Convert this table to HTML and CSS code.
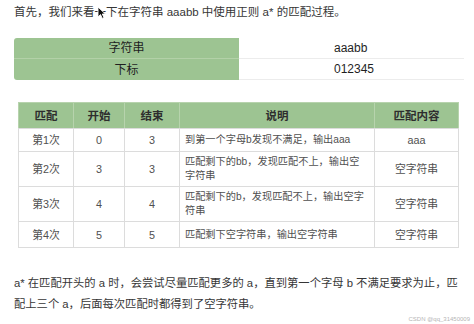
FILE: index.html
```html
<!DOCTYPE html>
<html lang="zh">
<head>
<meta charset="utf-8">
<link rel="stylesheet" href="styles.css">
</head>
<body>
<div class="page">
  <p class="para first">首先，我们来看一下在字符串 aaabb 中使用正则 a* 的匹配过程。<svg class="cursor" width="9" height="13" viewBox="0 0 9 13"><path d="M1 1 L1 11 L3.5 8.6 L5.3 12.4 L7 11.6 L5.3 8 L8.4 8 Z" fill="#111" stroke="#fff" stroke-width="0.9" stroke-linejoin="round"/></svg></p>

  <table class="info">
    <tr><td class="key top">字符串</td><td class="val">aaabb</td></tr>
    <tr><td class="key bottom">下标</td><td class="val">012345</td></tr>
  </table>

  <table class="steps">
    <colgroup>
      <col class="c1"><col class="c2"><col class="c3"><col class="c4"><col class="c5">
    </colgroup>
    <tr class="head"><th>匹配</th><th>开始</th><th>结束</th><th>说明</th><th>匹配内容</th></tr>
    <tr class="r1"><td>第1次</td><td>0</td><td>3</td><td class="desc">到第一个字母b发现不满足，输出aaa</td><td>aaa</td></tr>
    <tr class="r2"><td>第2次</td><td>3</td><td>3</td><td class="desc">匹配剩下的bb，发现匹配不上，输出空<br>字符串</td><td>空字符串</td></tr>
    <tr class="r3"><td>第3次</td><td>4</td><td>4</td><td class="desc">匹配剩下的b，发现匹配不上，输出空字<br>符串</td><td>空字符串</td></tr>
    <tr class="r4"><td>第4次</td><td>5</td><td>5</td><td class="desc">匹配剩下空字符串，输出空字符串</td><td>空字符串</td></tr>
  </table>

  <p class="para last">a* 在匹配开头的 a 时，会尝试尽量匹配更多的 a，直到第一个字母 b 不满足要求为止，匹配上三个 a，后面每次匹配时都得到了空字符串。</p>
  <div class="mark">CSDN @qq_31450009</div>
</div>
</body>
</html>
```
FILE: styles.css
```css
html, body {
  margin: 0;
  padding: 0;
  background: #fff;
}
body {
  font-family: "Liberation Sans", "Noto Sans CJK SC", sans-serif;
  color: #363636;
  width: 474px;
  height: 324px;
  overflow: hidden;
}
.page {
  padding: 0 10px 0 14px;
  position: relative;
  height: 324px;
  box-sizing: border-box;
}
.para {
  margin: 0;
  font-size: 11.3px;
  line-height: 21px;
}
.first {
  padding-top: 2px;
  position: relative;
  font-size: 11.5px;
}
.cursor {
  position: absolute;
  left: 83px;
  top: 6px;
}
.info {
  margin-top: 15px;
  border-collapse: separate;
  border-spacing: 0;
  width: 450px;
  font-size: 12px;
  color: #1f1f1f;
}
.info td {
  height: 21px;
  padding: 0;
  box-sizing: border-box;
  line-height: 20px;
}
.key {
  width: 225px;
  background: #9dc492;
  text-align: center;
}
.key.top {
  border-top-left-radius: 3px;
  border-bottom: 1px solid #b3d1a8;
}
.key.bottom {
  border-bottom-left-radius: 3px;
}
.val {
  padding-left: 95px !important;
  border-bottom: 1px solid #ececec;
}
.steps {
  margin: 22px 0 0 4px;
  border-collapse: collapse;
  table-layout: fixed;
  width: 440px;
  font-size: 10.8px;
  color: #505050;
}
.c1 { width: 55px; }
.c2 { width: 51px; }
.c3 { width: 55px; }
.c4 { width: 195px; }
.c5 { width: 84px; }
.steps th, .steps td {
  border: 1px solid #dcdcdc;
  padding: 0 4px;
  text-align: center;
  line-height: 14px;
  font-weight: normal;
}
.steps th {
  background: #9dc492;
  color: #2e2e2e;
  font-weight: bold;
  font-size: 11.5px;
  border-color: #b7d3ad;
  border-bottom-color: #dcdcdc;
}
.head { height: 26px; }
.r1 { height: 23px; }
.r2, .r3 { height: 35px; }
.r4 { height: 26px; }
.steps td.desc {
  text-align: left;
  padding-left: 5px;
  white-space: nowrap;
  font-size: 10.2px;
}
.last {
  margin-top: 25px;
  padding-right: 0;
}
.mark {
  position: absolute;
  right: 4px;
  bottom: 2px;
  font-size: 6px;
  color: #b5b5b5;
}
```
